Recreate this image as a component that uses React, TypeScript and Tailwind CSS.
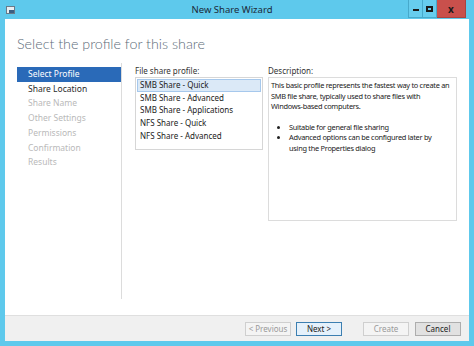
import React from 'react';

const steps = [
  { label: 'Select Profile', state: 'active' },
  { label: 'Share Location', state: 'enabled' },
  { label: 'Share Name', state: 'disabled' },
  { label: 'Other Settings', state: 'disabled' },
  { label: 'Permissions', state: 'disabled' },
  { label: 'Confirmation', state: 'disabled' },
  { label: 'Results', state: 'disabled' },
];

const profiles = [
  'SMB Share - Quick',
  'SMB Share - Advanced',
  'SMB Share - Applications',
  'NFS Share - Quick',
  'NFS Share - Advanced',
];

function Btn({ label, primary, disabled }: { label: string; primary?: boolean; disabled?: boolean }) {
  return (
    <div
      className={
        'h-[14px] w-[46px] flex items-center justify-center text-[8px] leading-none border ' +
        (primary
          ? 'border-[#3c7fb1] bg-[#e5f1fb] text-[#222]'
          : disabled
          ? 'border-[#cfcfcf] bg-[#f4f4f4] text-[#9a9a9a]'
          : 'border-[#adadad] bg-[#e1e1e1] text-[#222]')
      }
    >
      {label}
    </div>
  );
}

export default function App() {
  return (
    <div
      className="w-[474px] h-[346px] bg-[#5ec9ec] flex flex-col overflow-hidden"
      style={{ fontFamily: '"Noto Sans", "Open Sans", sans-serif' }}
    >
      {/* title bar */}
      <div className="h-[19px] flex items-start">
        <div className="w-[20px] h-[19px] shrink-0 flex items-center justify-center">
          <div className="w-[9px] h-[8px] border border-[#6a7a88] bg-[#e8eef2] relative">
            <div className="absolute bottom-0 right-0 w-[5px] h-[3px] bg-[#3b5f82]" />
          </div>
        </div>
        <div className="flex-1 text-center text-[9.5px] text-[#1c2a38] pt-[3px] pl-[36px]">New Share Wizard</div>
        <div className="flex shrink-0 h-[18px] mr-[8px]">
          <div className="w-[15px] h-[18px] shrink-0 flex items-end justify-center pb-[6px] bg-[#67cdee] border border-t-0 border-[#47a9cb]">
            <div className="w-[6px] h-[2px] bg-[#1a1a1a]" />
          </div>
          <div className="w-[14px] h-[18px] shrink-0 flex items-center justify-center bg-[#67cdee] border-b border-r border-[#47a9cb]">
            <div className="w-[7px] h-[6px] border-2 border-[#1a1a1a]" />
          </div>
          <div className="w-[29px] h-[18px] shrink-0 flex items-center justify-center bg-[#c9504c] border-b border-r border-[#a94440] text-[#1a1a1a] text-[10px] font-bold leading-none">
            x
          </div>
        </div>
      </div>

      {/* client area */}
      <div className="flex-1 mx-[5px] flex flex-col bg-white">
        <div className="h-[44px] flex items-end pl-[12px] pb-[12px]">
          <div
            className="text-[14.3px] font-light text-[#5d6c79] leading-none"
            style={{ fontFamily: 'Lato, "Noto Sans", sans-serif' }}
          >
            Select the profile for this share
          </div>
        </div>

        <div className="flex-1 flex pb-[13px]">
          {/* steps */}
          <div className="w-[117px] pl-[12px] pt-[4px] border-r border-[#dcdcdc] h-[236px]">
            <div className="flex flex-col">
              {steps.map((s) => (
                <div
                  key={s.label}
                  className={
                    'h-[14.7px] flex items-center pl-[11px] text-[8.5px] leading-none ' +
                    (s.state === 'active'
                      ? 'bg-[#2a6ab8] text-white'
                      : s.state === 'enabled'
                      ? 'text-[#2b2b2b]'
                      : 'text-[#b9b9b9]')
                  }
                >
                  {s.label}
                </div>
              ))}
            </div>
          </div>

          {/* profile list */}
          <div className="pl-[13px] pt-[4px] flex flex-col">
            <div className="text-[8px] text-[#333] leading-none h-[10px]">File share profile:</div>
            <div className="w-[128px] h-[73px] border border-[#d6d6d6] bg-white p-[1px] flex flex-col">
              {profiles.map((p, i) => (
                <div
                  key={p}
                  className={
                    'h-[12.6px] flex items-center pl-[2px] text-[8px] text-[#222] leading-none ' +
                    (i === 0 ? 'bg-[#dbe9f7] border border-[#a6c8ec]' : 'border border-transparent')
                  }
                >
                  {p}
                </div>
              ))}
            </div>
          </div>

          {/* description */}
          <div className="pl-[5px] pt-[4px] flex flex-col">
            <div className="text-[8px] text-[#333] leading-none h-[10px]">Description:</div>
            <div className="w-[189px] h-[144px] border border-[#dcdcdc] bg-white pl-[2px] pr-0 pt-[2px] text-[7.4px] text-[#222] leading-[10.5px] tracking-[-0.28px] whitespace-nowrap">
              <p>
                This basic profile represents the fastest way to create an
                <br />
                SMB file share, typically used to share files with
                <br />
                Windows-based computers.
              </p>
              <ul className="mt-[10px] pl-[18px] list-disc">
                <li>Suitable for general file sharing</li>
                <li>
                  Advanced options can be configured later by
                  <br />
                  using the Properties dialog
                </li>
              </ul>
            </div>
          </div>
        </div>

        {/* button bar */}
        <div className="h-[26px] bg-[#f0f0f0] border-t border-[#dfdfdf] flex items-center justify-end pr-[8px]">
          <div className="flex gap-[5px]">
            <Btn label="< Previous" disabled />
            <Btn label="Next >" primary />
          </div>
          <div className="flex gap-[6px] ml-[21px]">
            <Btn label="Create" disabled />
            <Btn label="Cancel" />
          </div>
        </div>
      </div>
      <div className="h-[5px]" />
    </div>
  );
}
